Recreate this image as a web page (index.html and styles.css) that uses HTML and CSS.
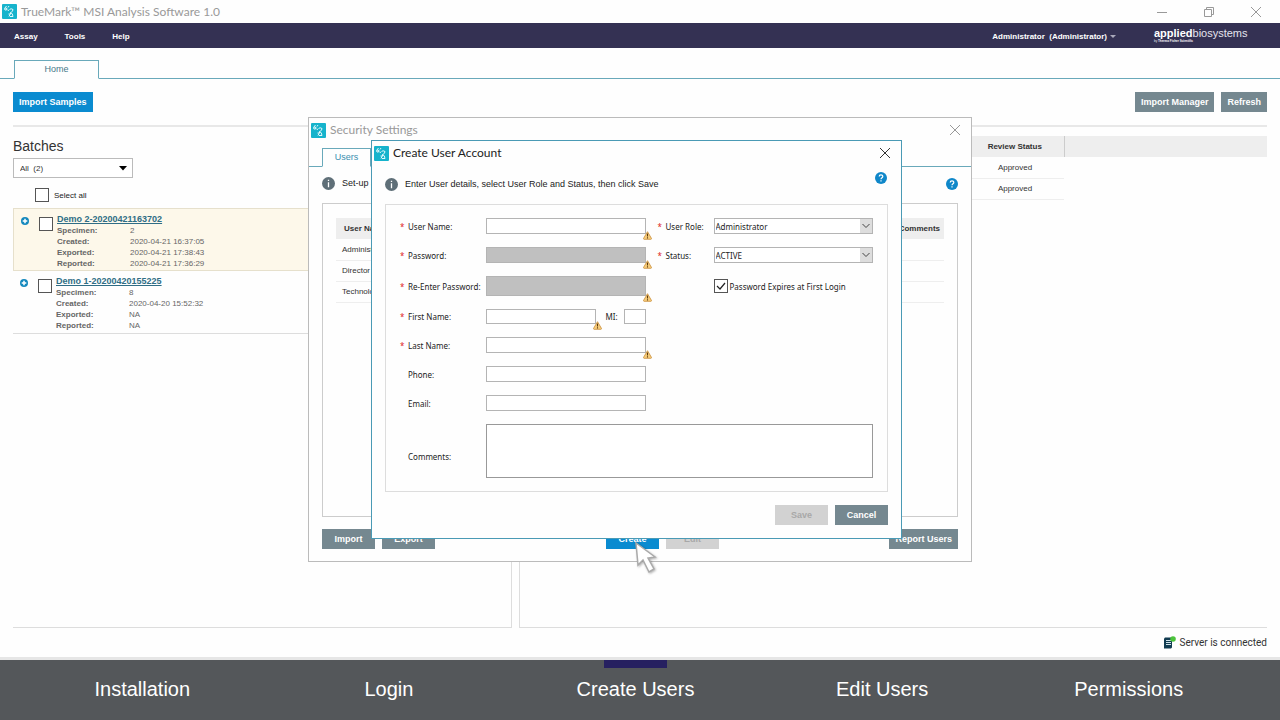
FILE: index.html
```html
<!DOCTYPE html>
<html lang="en">
<head>
    <meta charset="UTF-8">
    <meta name="viewport" content="width=device-width, initial-scale=1.0">
    <title>TrueMark MSI Analysis Software</title>
    <link rel="stylesheet" href="styles.css">
</head>
<body>
    <!-- Shared icons -->
    <svg class="sprite" aria-hidden="true">
        <symbol id="icon-app" viewBox="0 0 15 15">
            <rect width="15" height="15" rx="1" fill="#16b3cc"/>
            <g fill="none" stroke="#e2f8fb" stroke-width="1">
                <path d="M4.500 2 2.500 4.500l.5 1.500h1.500l.5-1.500-2-.5M6 3.500l1-1.500M5.500 6l1.500.5"/>
                <path d="M7.500 5.500q1.500-1.500 3.500 0 0 1.500-2 3L7 12.500M8 8.500q3 .5 3 4h-3M6.500 10h2"/>
            </g>
        </symbol>
        <symbol id="icon-info" viewBox="0 0 13 13">
            <circle cx="6.5" cy="6.5" r="6.5" fill="#5f6f78"/>
            <path d="M6.500 2.700v1.400M6.500 5.200v5" stroke="#fff" stroke-width="1.300"/>
        </symbol>
        <symbol id="icon-help" viewBox="0 0 12 12">
            <circle cx="6" cy="6" r="6" fill="#0f87c9"/>
            <path d="M4.200 4.600c0-2.400 3.600-2.300 3.600-.2C7.800 5.700 6 5.700 6 7.200M6 8.200v1.400" fill="none" stroke="#fff" stroke-width="1.200"/>
        </symbol>
        <symbol id="icon-close" viewBox="0 0 12 12">
            <path d="M1 1l10 10M11 1 1 11" stroke="currentColor" fill="none"/>
        </symbol>
        <symbol id="icon-warning" viewBox="0 0 9 9">
            <path d="M4.500.7 8.500 7.500q0 .8-.6.8H1.100q-.6 0-.6-.8z" fill="#f8cf7c" stroke="#c98a35" stroke-width=".8"/>
            <path d="M4.500 2.500v3M4.500 6.200v1.200" stroke="#5b3a10" stroke-width="1.100"/>
        </symbol>
        <symbol id="icon-plus" viewBox="0 0 8 8">
            <circle cx="4" cy="4" r="4" fill="#1488bd"/>
            <path d="M4 1.700v4.600M1.700 4h4.600" stroke="#fff" stroke-width="1.500"/>
        </symbol>
    </svg>

    <div class="app">
        <header class="title-bar">
            <svg class="app-icon"><use href="#icon-app"/></svg>
            <h1 class="title-text">TrueMark™ MSI Analysis Software 1.0</h1>
            <div class="window-buttons">
                <button class="icon-btn" aria-label="Minimize">
                    <svg width="12" height="12"><path d="M1 6.500h10" stroke="currentColor"/></svg>
                </button>
                <button class="icon-btn" aria-label="Restore">
                    <svg width="12" height="12" fill="none" stroke="currentColor"><path d="M1.500 3.500h7v7h-7zM3.500 3.500v-2h7v7h-2"/></svg>
                </button>
                <button class="icon-btn" aria-label="Close">
                    <svg width="12" height="12"><use href="#icon-close"/></svg>
                </button>
            </div>
        </header>

        <nav class="menu-bar">
            <a href="#">Assay</a>
            <a href="#">Tools</a>
            <a href="#">Help</a>
            <button class="account-btn">Administrator&nbsp; (Administrator)<span class="caret"></span></button>
            <div class="brand">
                <div class="brand-name"><b>applied</b>biosystems</div>
                <div class="brand-tag">by <b>Thermo Fisher Scientific</b></div>
            </div>
        </nav>

        <div class="tabs main-tabs">
            <a class="tab" href="#">Home</a>
        </div>

        <main class="content">
            <div class="toolbar">
                <button class="btn btn-primary">Import Samples</button>
                <div class="toolbar-right">
                    <button class="btn">Import Manager</button>
                    <button class="btn">Refresh</button>
                </div>
            </div>

            <div class="panes">
                <section class="batches">
                    <h2>Batches</h2>
                    <select class="batch-filter" aria-label="Batch filter">
                        <option>All&nbsp; (2)</option>
                    </select>
                    <label class="select-all"><input type="checkbox" class="check">Select all</label>

                    <article class="batch selected">
                        <svg class="plus"><use href="#icon-plus"/></svg>
                        <input type="checkbox" class="check" aria-label="Demo 2-20200421163702">
                        <div>
                            <a href="#">Demo 2-20200421163702</a>
                            <dl>
                                <dt>Specimen:</dt><dd>2</dd>
                                <dt>Created:</dt><dd>2020-04-21 16:37:05</dd>
                                <dt>Exported:</dt><dd>2020-04-21 17:38:43</dd>
                                <dt>Reported:</dt><dd>2020-04-21 17:36:29</dd>
                            </dl>
                        </div>
                    </article>

                    <article class="batch">
                        <svg class="plus"><use href="#icon-plus"/></svg>
                        <input type="checkbox" class="check" aria-label="Demo 1-20200420155225">
                        <div>
                            <a href="#">Demo 1-20200420155225</a>
                            <dl>
                                <dt>Specimen:</dt><dd>8</dd>
                                <dt>Created:</dt><dd>2020-04-20 15:52:32</dd>
                                <dt>Exported:</dt><dd>NA</dd>
                                <dt>Reported:</dt><dd>NA</dd>
                            </dl>
                        </div>
                    </article>
                </section>

                <section class="samples">
                    <table class="grid samples-grid">
                        <thead>
                            <tr><th class="col-sample"></th><th class="col-status">Review Status</th><th></th></tr>
                        </thead>
                        <tbody>
                            <tr><td></td><td>Approved</td></tr>
                            <tr><td></td><td>Approved</td></tr>
                        </tbody>
                    </table>
                </section>
            </div>

            <div class="status-bar">
                <svg width="13" height="13" viewBox="0 0 13 13" aria-hidden="true">
                    <path d="M1 2.500 2 1.500h7v10l-1 1H1z" fill="#123c52"/>
                    <path d="M3 4.500H8M3 6.500H8M3 8.500H8" stroke="#cfe3ea"/>
                    <circle cx="10" cy="3" r="2.800" fill="#4cc33c"/>
                </svg>
                <span>Server is connected</span>
            </div>
        </main>

        <!-- Security Settings window -->
        <section class="dialog security" aria-label="Security Settings">
            <header class="dialog-title">
                <svg class="app-icon"><use href="#icon-app"/></svg>
                <h2>Security Settings</h2>
                <button class="icon-btn" aria-label="Close"><svg width="12" height="12"><use href="#icon-close"/></svg></button>
            </header>
            <div class="tabs security-tabs">
                <a class="tab" href="#">Users</a>
            </div>
            <div class="hint">
                <svg class="info"><use href="#icon-info"/></svg>
                <p>Set-up a</p>
                <button class="icon-btn help" aria-label="Help"><svg width="12" height="12"><use href="#icon-help"/></svg></button>
            </div>
            <div class="user-list">
                <table class="grid users-grid">
                    <thead>
                        <tr><th>User Name</th><th class="col-comments">Comments</th></tr>
                    </thead>
                    <tbody>
                        <tr><td>Administrator</td><td></td></tr>
                        <tr><td>Director</td><td></td></tr>
                        <tr><td>Technologist</td><td></td></tr>
                    </tbody>
                </table>
            </div>
            <footer class="security-actions">
                <div class="btn-group">
                    <button class="btn">Import</button>
                    <button class="btn">Export</button>
                </div>
                <div class="btn-group">
                    <button class="btn btn-primary">Create</button>
                    <button class="btn" disabled>Edit</button>
                </div>
                <div class="btn-group btn-group-end">
                    <button class="btn">Report Users</button>
                </div>
            </footer>
        </section>

        <!-- Create User Account window -->
        <form class="dialog create-user" aria-label="Create User Account">
            <header class="dialog-title">
                <svg class="app-icon"><use href="#icon-app"/></svg>
                <h2>Create User Account</h2>
                <button type="button" class="icon-btn" aria-label="Close"><svg width="12" height="12"><use href="#icon-close"/></svg></button>
            </header>
            <div class="hint">
                <svg class="info"><use href="#icon-info"/></svg>
                <p>Enter User details, select User Role and Status, then click Save</p>
                <button type="button" class="icon-btn help" aria-label="Help"><svg width="12" height="12"><use href="#icon-help"/></svg></button>
            </div>

            <div class="fields">
                <label class="required" for="userName">User Name:</label>
                <div class="field"><input type="text" id="userName"><svg class="warning"><use href="#icon-warning"/></svg></div>
                <label class="required second" for="userRole">User Role:</label>
                <select id="userRole"><option>Administrator</option></select>

                <label class="required" for="password">Password:</label>
                <div class="field"><input type="password" id="password" disabled><svg class="warning"><use href="#icon-warning"/></svg></div>
                <label class="required second" for="status">Status:</label>
                <select id="status"><option>ACTIVE</option></select>

                <label class="required" for="rePassword">Re-Enter Password:</label>
                <div class="field"><input type="password" id="rePassword" class="tall" disabled><svg class="warning"><use href="#icon-warning"/></svg></div>
                <label class="expires"><input type="checkbox" class="check" checked>Password Expires at First Login</label>

                <label class="required" for="firstName">First Name:</label>
                <div class="name-row">
                    <div class="field"><input type="text" id="firstName"><svg class="warning"><use href="#icon-warning"/></svg></div>
                    <label for="middle">MI:</label>
                    <input type="text" id="middle">
                </div>

                <label class="required first" for="lastName">Last Name:</label>
                <div class="field"><input type="text" id="lastName"><svg class="warning"><use href="#icon-warning"/></svg></div>

                <label class="first" for="phone">Phone:</label>
                <div class="field"><input type="text" id="phone"></div>

                <label class="first" for="email">Email:</label>
                <div class="field"><input type="text" id="email"></div>

                <label class="first comments-label" for="comments">Comments:</label>
                <textarea id="comments"></textarea>
            </div>

            <footer class="form-actions">
                <button type="submit" class="btn" disabled>Save</button>
                <button type="button" class="btn">Cancel</button>
            </footer>
        </form>

        <svg class="pointer" width="28" height="36" viewBox="0 0 28 36" aria-hidden="true">
            <path d="M2 2 4 24l5-5 6 12 5-3-6-11 7-1z" fill="#fff" stroke="#aaa" stroke-width="1.500"/>
        </svg>
    </div>

    <nav class="chapters">
        <a href="#">Installation</a>
        <a href="#">Login</a>
        <a href="#" class="active">Create Users</a>
        <a href="#">Edit Users</a>
        <a href="#">Permissions</a>
    </nav>
</body>
</html>
```
FILE: styles.css
```css
* {
    box-sizing: border-box;
    margin: 0;
    padding: 0;
}

body {
    display: flex;
    flex-direction: column;
    min-height: 100vh;
    background-color: #fefefe;
    color: #333;
    font-family: "Liberation Sans", Arial, sans-serif;
    font-size: 8px;
    line-height: 11px;
}

button, input, select, textarea {
    font: inherit;
    color: inherit;
}

a {
    color: inherit;
    text-decoration: none;
}

.sprite {
    position: absolute;
    width: 0;
    height: 0;
}

.app {
    flex: 1;
    display: flex;
    flex-direction: column;
    position: relative;
    border-bottom: 3px solid #e6e6e6;
}

/* Title bar */
.title-bar {
    display: flex;
    align-items: center;
    height: 23px;
    padding: 0 18px 0 2px;
    color: #999;
}

.app-icon {
    width: 15px;
    height: 15px;
}

.title-text {
    margin-left: 4px;
    font-family: Lato, sans-serif;
    font-size: 12px;
    font-weight: normal;
    line-height: 16px;
}

.window-buttons {
    display: flex;
    gap: 35px;
    margin-left: auto;
}

.icon-btn {
    display: flex;
    border: none;
    background: none;
    cursor: pointer;
}

/* Menu bar */
.menu-bar {
    display: flex;
    align-items: center;
    gap: 27px;
    height: 25px;
    padding: 1px 34px 0 14px;
    background-color: #343153;
    color: white;
    font-weight: bold;
}

.account-btn {
    display: flex;
    align-items: center;
    gap: 3px;
    margin-left: auto;
    border: none;
    background: none;
    cursor: pointer;
}

.caret {
    border: 3px solid transparent;
    border-top-color: #aaa9bb;
    border-bottom: none;
}

.brand {
    width: 92px;
    margin-left: 11px;
    padding-bottom: 2px;
    color: #e4e4ee;
    font-weight: normal;
}

.brand b {
    color: white;
}

.brand-name {
    font-size: 11px;
    line-height: 12px;
}

.brand-tag {
    font-size: 3px;
    line-height: 4px;
}

/* Tabs */
.tabs {
    display: flex;
    border-bottom: 1px solid #69a9ba;
}

.tab {
    margin-bottom: -1px;
    border: 1px solid #69a9ba;
    border-bottom-color: #fefefe;
    background-color: #fefefe;
    font-size: 9px;
    text-align: center;
}

.main-tabs {
    padding: 12px 14px 0;
}

.main-tabs .tab {
    width: 85px;
    line-height: 17px;
    color: #47798a;
}

/* Main content */
.content {
    flex: 1;
    display: flex;
    flex-direction: column;
    padding: 13px 13px 0;
}

.toolbar {
    display: flex;
    justify-content: space-between;
    padding-bottom: 13px;
    border-bottom: 2px solid #e8e8e8;
}

.toolbar-right,
.btn-group {
    display: flex;
    gap: 7px;
}

.btn {
    height: 20px;
    padding: 0 6px;
    border: none;
    background-color: #758890;
    color: white;
    font-size: 9px;
    font-weight: bold;
    cursor: pointer;
}

.btn-primary {
    background-color: #0a8bd0;
}

.btn:disabled {
    background-color: #d2d2d2;
    color: #a8a8a8;
}

.panes {
    flex: 1;
    display: grid;
    grid-template-columns: 499fr 748fr;
    gap: 7px;
    padding-top: 9px;
}

.batches {
    border-right: 1px solid #ddd;
    border-bottom: 1px solid #ddd;
}

.batches h2 {
    color: #333;
    font-size: 14px;
    font-weight: normal;
    line-height: 20px;
}

.batch-filter {
    display: block;
    appearance: none;
    width: 120px;
    height: 20px;
    margin-top: 2px;
    padding: 0 6px;
    border: 1px solid #bbb;
    border-radius: 0;
    background: white url("data:image/svg+xml,%3Csvg xmlns='http://www.w3.org/2000/svg' width='8' height='5'%3E%3Cpath d='M0 0h8L4 4.500z'/%3E%3C/svg%3E") no-repeat right 5px center;
}

.check {
    appearance: none;
    flex: none;
    width: 14px;
    height: 14px;
    border: 1px solid #555;
    background-color: white;
}

.check:checked {
    background-image: url("data:image/svg+xml,%3Csvg xmlns='http://www.w3.org/2000/svg' width='12' height='12'%3E%3Cpath d='M2 6l3 3 5-6' fill='none' stroke='%23222' stroke-width='1.200'/%3E%3C/svg%3E");
}

.select-all {
    display: flex;
    align-items: center;
    gap: 5px;
    width: max-content;
    margin: 10px 0 6px 22px;
    color: #222;
}

.batch {
    display: flex;
    height: 63px;
    padding: 5px 6px 0 7px;
    border-bottom: 1px solid #ddd;
    color: #666;
}

.batch.selected {
    border: 1px solid #e6e0cc;
    background-color: #fdf8ea;
}

.plus {
    width: 8px;
    height: 8px;
    margin-top: 3px;
}

.batch .check {
    margin: 3px 4px 0 10px;
}

.batch a {
    color: #2f6d85;
    font-size: 9px;
    font-weight: bold;
    text-decoration: underline;
}

.batch dl {
    display: grid;
    grid-template-columns: 73px auto;
}

.batch dt {
    font-weight: bold;
}

/* Tables */
.grid {
    width: 100%;
    border-collapse: collapse;
    table-layout: fixed;
}

.grid th {
    height: 21px;
    background-color: #eee;
}

.grid td {
    height: 21px;
    border-bottom: 1px solid #eee;
}

.samples {
    border-left: 1px solid #ddd;
    border-bottom: 1px solid #ddd;
}

.samples-grid td {
    text-align: center;
}

.col-sample {
    width: 446px;
}

.col-status {
    width: 98px;
    border-right: 1px solid #ccc;
}

.status-bar {
    display: flex;
    align-items: center;
    justify-content: flex-end;
    gap: 4px;
    height: 29px;
    font-family: Roboto, sans-serif;
    font-size: 10px;
}

/* Windows */
.dialog {
    position: absolute;
    background-color: #fefefe;
}

.dialog-title {
    display: flex;
    align-items: center;
    height: 24px;
    padding: 0 10px 0 2px;
}

.dialog-title h2 {
    margin-left: 4px;
    font-family: Lato, sans-serif;
    font-size: 12px;
    font-weight: normal;
    line-height: 16px;
}

.dialog-title .icon-btn,
.help {
    margin-left: auto;
}

.info {
    flex: none;
    width: 13px;
    height: 13px;
}

.hint {
    display: flex;
    align-items: center;
    color: #222;
    font-size: 9px;
    line-height: 13px;
}

.hint p {
    margin-left: 7px;
}

.security {
    top: 117px;
    left: calc(50% - 332px);
    width: 664px;
    border: 1px solid #bbb;
}

.security .dialog-title {
    color: #999;
}

.security-tabs {
    margin-top: 6px;
    padding-left: 13px;
}

.security-tabs .tab {
    width: 49px;
    line-height: 17px;
    color: #3a8fb0;
}

.security .hint {
    padding: 10px 13px 13px;
}

.user-list {
    height: 314px;
    margin: 0 13px;
    padding: 14px 13px;
    border: 1px solid #ccc;
}

.users-grid th,
.users-grid td {
    padding: 0 8px;
    text-align: left;
}

.users-grid td {
    padding-left: 6px;
}

.users-grid .col-comments {
    padding-right: 4px;
    text-align: right;
}

.security-actions {
    display: grid;
    grid-template-columns: 284px auto 1fr;
    padding: 12px 13px;
}

.security-actions .btn {
    min-width: 53px;
}

.btn-group-end {
    justify-content: flex-end;
}

.create-user {
    top: 140px;
    left: calc(50% - 269px);
    width: 531px;
    border: 1px solid #4a9ab5;
}

.create-user .dialog-title h2 {
    color: #222;
}

.create-user .hint {
    align-items: flex-end;
    height: 39px;
    padding: 0 14px 13px 13px;
}

/* The help button sits above the hint's own line */
.create-user .help {
    margin-bottom: 7px;
}

.fields {
    display: grid;
    grid-template-columns: 86px 1fr 68px 1fr;
    row-gap: 13px;
    align-items: center;
    margin: 0 13px;
    padding: 13px 14px;
    border: 1px solid #ddd;
    color: #222;
    font-family: "Noto Sans", Tahoma, sans-serif;
}

.fields label {
    padding-left: 8px;
    white-space: nowrap;
}

.fields .required {
    padding-left: 0;
}

.required::before {
    content: "*";
    display: inline-block;
    width: 8px;
    color: #d22;
}

.fields .second {
    padding-left: 12px;
}

.fields .first {
    grid-column: 1;
}

.field {
    position: relative;
}

.fields input[type="text"],
.fields input[type="password"],
.fields select {
    display: block;
    width: 100%;
    height: 16px;
    border: 1px solid #b4b4b4;
    border-radius: 0;
    background-color: white;
}

.fields input:disabled {
    background-color: #c0c0c0;
}

.fields input.tall {
    height: 20px;
}

.fields select {
    appearance: none;
    padding-left: 1px;
    background: white url("data:image/svg+xml,%3Csvg xmlns='http://www.w3.org/2000/svg' width='12' height='14'%3E%3Cpath d='M0 0h12v14H0z' fill='%23ddd'/%3E%3Cpath d='M2.500 5l3.500 3.500L9.500 5' fill='none' stroke='%23444'/%3E%3C/svg%3E") no-repeat right center;
}

.warning {
    position: absolute;
    right: -6px;
    bottom: -6px;
    width: 9px;
    height: 9px;
}

.fields .expires {
    grid-column: 4;
    display: flex;
    align-items: center;
    gap: 2px;
    padding-left: 0;
}

.name-row {
    display: grid;
    grid-template-columns: 1fr 28px 22px;
    align-items: center;
}

.name-row label {
    padding-left: 10px;
}

.fields .name-row input {
    height: 15px;
}

.fields textarea {
    grid-column: 2 / -1;
    height: 54px;
    border: 1px solid #999;
    background-color: white;
    resize: none;
}

.comments-label {
    padding-top: 10px;
}

.form-actions {
    display: flex;
    justify-content: flex-end;
    gap: 7px;
    padding: 13px;
}

.form-actions .btn {
    width: 53px;
}

.pointer {
    position: absolute;
    top: 541px;
    left: calc(50% - 6px);
    filter: drop-shadow(1px 1px 1px rgba(0, 0, 0, 0.3));
}

/* Chapter navigation */
.chapters {
    display: grid;
    grid-template-columns: repeat(5, 1fr);
    padding: 0 28px 0 19px;
    background-color: #54575a;
    color: white;
    font-size: 20px;
    line-height: 24px;
    text-align: center;
}

.chapters a {
    position: relative;
    padding: 17px 0 19px;
}

.chapters .active::before {
    content: "";
    position: absolute;
    top: 0;
    left: calc(50% - 31px);
    width: 63px;
    height: 8px;
    background-color: #262060;
}
```
